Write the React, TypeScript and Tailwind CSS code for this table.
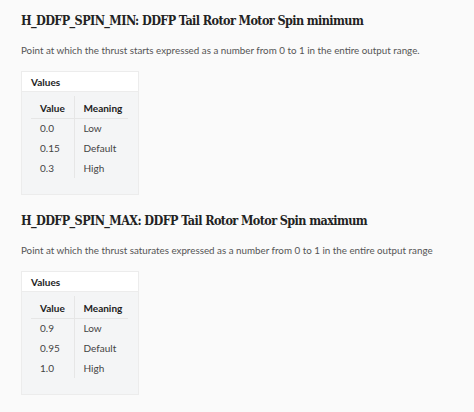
import React from 'react';

type Param = {
  name: string;
  title: string;
  description: string;
  values: [string, string][];
};

const params: Param[] = [
  {
    name: 'H_DDFP_SPIN_MIN',
    title: 'DDFP Tail Rotor Motor Spin minimum',
    description: 'Point at which the thrust starts expressed as a number from 0 to 1 in the entire output range.',
    values: [
      ['0.0', 'Low'],
      ['0.15', 'Default'],
      ['0.3', 'High'],
    ],
  },
  {
    name: 'H_DDFP_SPIN_MAX',
    title: 'DDFP Tail Rotor Motor Spin maximum',
    description: 'Point at which the thrust saturates expressed as a number from 0 to 1 in the entire output range',
    values: [
      ['0.9', 'Low'],
      ['0.95', 'Default'],
      ['1.0', 'High'],
    ],
  },
];

function ValuesCard({ values }: { values: [string, string][] }) {
  return (
    <div className="w-[118px] border border-[#ececec] bg-[#f4f5f6]">
      <div className="h-[20px] bg-white border-b border-[#ececec] pl-[9px] text-[10px] font-bold leading-[20px] text-[#222]">
        Values
      </div>
      <div className="px-[9px] pt-[4px] pb-[16px]">
        <table className="w-[97px] border-collapse text-[10px] text-[#444]">
          <thead>
            <tr className="h-[22px] border-b border-[#e6e6e6]">
              <th className="w-[43px] border-r border-[#e6e6e6] pl-[9px] pt-[3px] text-left font-bold text-[#222]">Value</th>
              <th className="pl-[9px] pt-[3px] text-left font-bold text-[#222]">Meaning</th>
            </tr>
          </thead>
          <tbody>
            {values.map(([v, m], i) => (
              <tr key={i} className="h-[20px]">
                <td className="border-r border-[#e6e6e6] pl-[9px]">{v}</td>
                <td className="pl-[9px]">{m}</td>
              </tr>
            ))}
          </tbody>
        </table>
      </div>
    </div>
  );
}

function App() {
  return (
    <div className="w-[474px] h-[412px] overflow-hidden bg-[#fafafa] px-[21px] pt-[13px] font-['Lato',sans-serif]">
      {params.map((p) => (
        <div key={p.name} className="mb-[18px]">
          <h2 className="whitespace-nowrap text-[12.5px] font-bold leading-[16px] tracking-[-0.6px] text-[#222] font-['DejaVu_Serif_Condensed','DejaVu_Serif',serif]">
            {p.name}: {p.title}
          </h2>
          <p className="mt-[13px] whitespace-nowrap text-[9.8px] leading-[16px] text-[#555]">{p.description}</p>
          <div className="mt-[13px]">
            <ValuesCard values={p.values} />
          </div>
        </div>
      ))}
    </div>
  );
}

export default App;
